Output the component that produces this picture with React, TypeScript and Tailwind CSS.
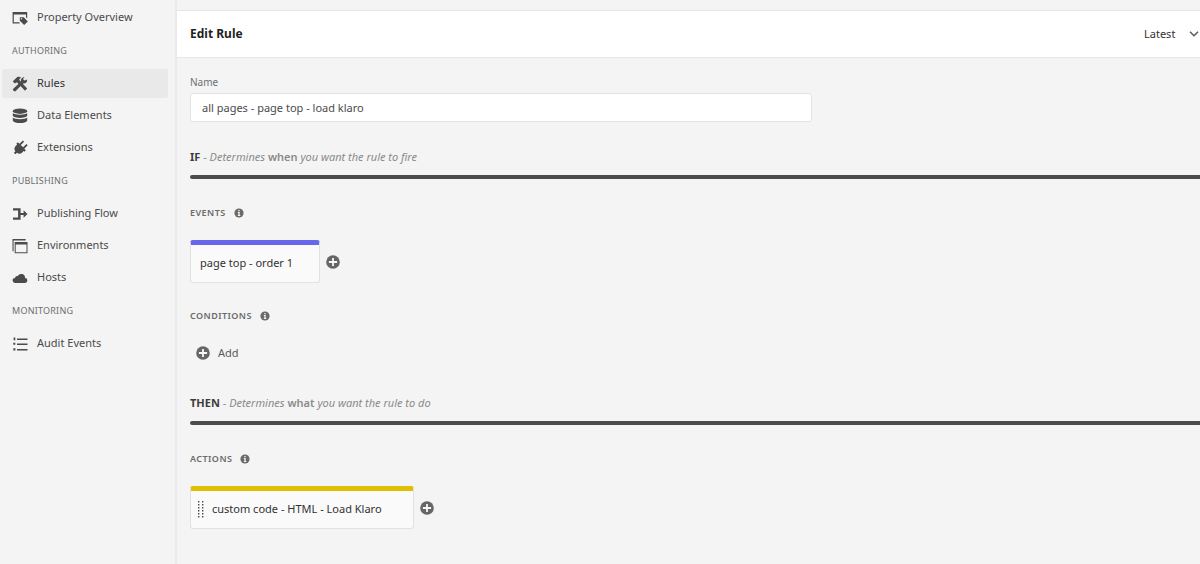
import { useState } from "react";
import type { ReactNode } from "react";

function Icon({ children }: { children: ReactNode }) {
  return (
    <svg viewBox="0 0 16 16" aria-hidden="true" className="size-4 shrink-0 fill-[#4b4b4b]">
      {children}
    </svg>
  );
}

const icons = {
  overview: (
    <Icon>
      <path d="M.6 2h14.600v6.400l-1.200-1.200V4.400H1.800v7.800h5.800v1.200H.6z" />
      <path d="M7.800 7.200h4l4 4.200-3.600 3.600-4.400-4.200z" />
      <circle cx="9.500" cy="8.800" r=".7" fill="#f4f4f4" />
    </Icon>
  ),
  rules: (
    <Icon>
      <path d="M.8 5.200 5 1.200c1.200-.6 2.800-.6 4 .2L7.200 3.400l.3.900 7.700 8.300-2.200 2.200-7.800-8.300-1-.1-1.500 1.200z" />
      <path d="M1 12.900 9 5.500c-.6-2.300.9-4.500 3.600-4.600L11 3.100l1.300 1.500 2.800-1.200c.4 2.700-1.800 4.500-4 4L3.500 15.200c-.9.800-3.300-1.400-2.500-2.300z" />
    </Icon>
  ),
  data: (
    <Icon>
      <ellipse cx="8" cy="3.200" rx="7.200" ry="2.700" />
      <path d="M.8 4.900c1.800 2.300 12.600 2.300 14.400 0v2.900c-1.400 2.800-13 2.800-14.400 0z" />
      <path d="M.8 9.400c1.800 2.300 12.600 2.300 14.400 0v3.300c-1.400 3.200-13 3.200-14.400 0z" />
    </Icon>
  ),
  extensions: (
    <Icon>
      <g transform="translate(-1 1) rotate(45 8 8)">
        <path d="M4.700-.8h1.800V4h3.200V-.8h1.800V4h2.300v2.200h-1.100v2.300c0 2-1.500 3.400-3.500 3.600v2.200H7v-2.200c-2-.2-3.500-1.600-3.500-3.600V6.200H2.400V4h2.300z" />
      </g>
    </Icon>
  ),
  flow: (
    <Icon>
      <path d="M1 2.200h7.600v4.700h3V4.300L15.500 8l-3.900 3.700V9.100h-3v4.700H1v-2.400h5.100V4.600H1z" />
    </Icon>
  ),
  environments: (
    <Icon>
      <path d="M.5 1h13.200v1.600H1.600v10.600H.5z" />
      <path fillRule="evenodd" d="M2.700 3.900h12.800v11.300H2.700zM3.700 6.600v7.600h10.800V6.600z" />
    </Icon>
  ),
  hosts: (
    <Icon>
      <path d="M3.200 12.900a2.500 2.500 0 0 1-.2-5 2.300 2.300 0 0 1 2.800-1.800 3.800 3.800 0 0 1 7.200 2 2.400 2.400 0 0 1 0 4.800z" />
    </Icon>
  ),
  audit: (
    <Icon>
      <path d="M5 2.600h10.500v1.400H5zM5 7.600h10.500v1.400H5zM5 13h10.500v1.400H5zM1.600 1.400h1.700v2.800H1.600zM1.300 6.800h2v2h-2zM1.300 12.200h2.100v2.300H1.300z" />
    </Icon>
  ),
};

function NavItem({ icon, label, active = false }: { icon: ReactNode; label: string; active?: boolean }) {
  return (
    <a
      href="#"
      aria-current={active ? "page" : undefined}
      className={
        active
          ? "flex h-[29px] items-center gap-[9px] rounded-xs bg-[#e9e9e9] px-2.5 text-[#323232]"
          : "flex h-[29px] items-center gap-[9px] rounded-xs px-2.5"
      }
    >
      {icon}
      {label}
    </a>
  );
}

function NavHeading({ children }: { children: ReactNode }) {
  return (
    <h2 className="flex h-[37px] items-center px-2.5 text-[9px] tracking-wide text-[#6e6e6e]">{children}</h2>
  );
}

function InfoButton({ label }: { label: string }) {
  return (
    <button type="button" aria-label={label} className="flex">
      <svg viewBox="0 0 10 10" aria-hidden="true" className="size-2.5">
        <circle cx="5" cy="5" r="4.600" fill="#6a6a6a" />
        <path d="M4.300 1.900h1.400v1.300H4.300zM3.800 4.100h1.900v3h.6v.8H3.800v-.8h.6V4.900h-.6z" fill="#f4f4f4" />
      </svg>
    </button>
  );
}

function PlusIcon() {
  return (
    <svg viewBox="0 0 14 14" aria-hidden="true" className="size-3.5 shrink-0">
      <circle cx="7" cy="7" r="6.800" fill="#666" />
      <path d="M6.100 2.900h1.800v3.200h3.200v1.800H7.900v3.200H6.100V7.900H2.900V6.100h3.200z" fill="#f8f8f8" />
    </svg>
  );
}

function SectionTitle({ children, info }: { children: ReactNode; info: string }) {
  return (
    <div className="flex h-4 items-center gap-2">
      <h3 className="text-[9px] font-semibold tracking-wider text-[#6a6a6a]">{children}</h3>
      <InfoButton label={info} />
    </div>
  );
}

function Clause({ keyword, before, strong, after }: { keyword: string; before: string; strong: string; after: string }) {
  return (
    <div>
      <p className="text-[11px] leading-4 text-[#8a8a8a]">
        <b className="text-[#3c3c3c]">{keyword}</b> - <i>{before}</i> <b className="font-semibold">{strong}</b>{" "}
        <i>{after}</i>
      </p>
      <div className="mt-2.5 h-1 rounded-l-full bg-[#4b4b4b]" />
    </div>
  );
}

export default function App() {
  const [name, setName] = useState("all pages - page top - load klaro");
  return (
    <div className="flex min-h-screen bg-[#f4f4f4] font-['Noto_Sans',sans-serif] text-[11px] text-[#4b4b4b]">
      <nav aria-label="Property" className="w-[177px] shrink-0 border-r-2 border-[#eaeaea] pt-[3px] pr-[7px] pl-0.5">
        <NavItem icon={icons.overview} label="Property Overview" />
        <NavHeading>AUTHORING</NavHeading>
        <div className="flex flex-col gap-[3px]">
          <NavItem icon={icons.rules} label="Rules" active />
          <NavItem icon={icons.data} label="Data Elements" />
          <NavItem icon={icons.extensions} label="Extensions" />
        </div>
        <NavHeading>PUBLISHING</NavHeading>
        <div className="flex flex-col gap-[3px]">
          <NavItem icon={icons.flow} label="Publishing Flow" />
          <NavItem icon={icons.environments} label="Environments" />
          <NavItem icon={icons.hosts} label="Hosts" />
        </div>
        <NavHeading>MONITORING</NavHeading>
        <NavItem icon={icons.audit} label="Audit Events" />
      </nav>

      <main className="min-w-0 flex-1 pt-2.5">
        <header className="flex h-12 items-center justify-between border-y border-[#e6e6e6] bg-white pl-[13px]">
          <h1 className="text-xs font-bold text-[#1f1f1f]">Edit Rule</h1>
          <div className="relative">
            <select aria-label="Version" className="w-14 appearance-none bg-transparent text-[#323232]">
              <option>Latest</option>
            </select>
            <svg
              viewBox="0 0 10 6"
              aria-hidden="true"
              className="pointer-events-none absolute top-1/2 right-px h-1.5 w-2.5 -translate-y-1/2 fill-none stroke-[#5a5a5a] stroke-[1.5]"
            >
              <path d="M1 .8 5 4.800 9 .8" />
            </svg>
          </div>
        </header>

        <div className="pt-4 pl-[13px]">
          <label htmlFor="rule-name" className="block text-[10px] leading-4 text-[#6e6e6e]">
            Name
          </label>
          <input
            id="rule-name"
            value={name}
            onChange={(e) => setName(e.target.value)}
            className="mt-[3px] block h-[29px] w-full max-w-[622px] rounded-[3px] border border-[#e3e3e3] bg-white px-[11px] text-[#4b4b4b]"
          />

          <div className="mt-[27px]">
            <Clause keyword="IF" before="Determines" strong="when" after="you want the rule to fire" />
          </div>

          <div className="mt-[26px]">
            <SectionTitle info="About events">EVENTS</SectionTitle>
          </div>
          <div className="mt-[19px] flex items-center gap-1.5">
            <button
              type="button"
              className="flex h-[43px] w-[130px] items-center rounded-[3px] border border-t-[5px] border-[#e1e1e1] border-t-[#6767ec] bg-[#fafafa] px-[9px] text-[#323232]"
            >
              page top - order 1
            </button>
            <button type="button" aria-label="Add event">
              <PlusIcon />
            </button>
          </div>

          <div className="mt-[25px]">
            <SectionTitle info="About conditions">CONDITIONS</SectionTitle>
          </div>
          <button type="button" className="mt-[21px] ml-1.5 flex h-4 items-center gap-2 text-[#5a5a5a]">
            <PlusIcon />
            Add
          </button>

          <div className="mt-[34px]">
            <Clause keyword="THEN" before="Determines" strong="what" after="you want the rule to do" />
          </div>

          <div className="mt-[26px]">
            <SectionTitle info="About actions">ACTIONS</SectionTitle>
          </div>
          <div className="mt-[19px] flex items-center gap-1.5">
            <button
              type="button"
              className="flex h-[43px] w-56 items-center gap-2 rounded-[3px] border border-t-[5px] border-[#e1e1e1] border-t-[#dfbf00] bg-[#fafafa] px-1.5 text-[#323232]"
            >
              <svg viewBox="0 0 7 17" aria-hidden="true" className="h-[17px] w-[7px] fill-[#4b4b4b]">
                {[0, 3, 6, 9, 12, 15].map((y) => (
                  <path key={y} d={`M1 ${y}h1.400v1.400H1zM5 ${y}h1.400v1.400H5z`} />
                ))}
              </svg>
              custom code - HTML - Load Klaro
            </button>
            <button type="button" aria-label="Add action">
              <PlusIcon />
            </button>
          </div>
        </div>
      </main>
    </div>
  );
}
